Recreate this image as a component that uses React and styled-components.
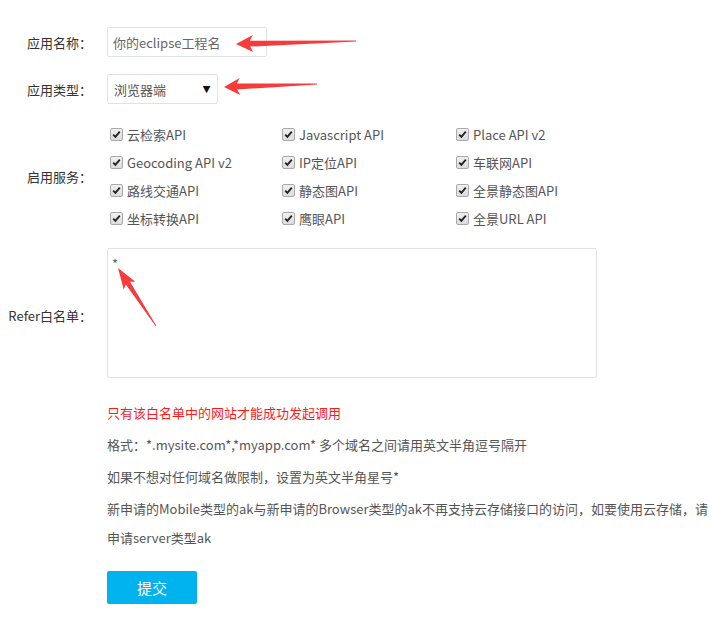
import styled, { createGlobalStyle } from 'styled-components';

const GlobalStyle = createGlobalStyle`
  html, body {
    margin: 0;
    padding: 0;
    background: #fff;
  }
  body {
    font-family: "Noto Sans CJK SC", "Open Sans", sans-serif;
    font-size: 13px;
    color: #555;
  }
`;

const Page = styled.div`
  position: relative;
  width: 714px;
  min-height: 619px;
  padding-top: 27px;
  box-sizing: border-box;
`;

const Row = styled.div`
  display: grid;
  grid-template-columns: 92px 1fr;
  column-gap: 15px;
  align-items: center;
  margin-bottom: ${(props) => props.gap || 16}px;
`;

const Label = styled.label`
  text-align: right;
  font-size: 13px;
  color: #333;
  white-space: nowrap;
`;

const TextInput = styled.input`
  width: 160px;
  height: 30px;
  box-sizing: border-box;
  padding: 0 5px;
  border: 1px solid #dfe2e8;
  border-radius: 2px;
  font-family: inherit;
  font-size: 13px;
  color: #666;
  outline: none;
`;

const SelectBox = styled.div`
  width: 111px;
  height: 30px;
  box-sizing: border-box;
  display: flex;
  align-items: center;
  justify-content: space-between;
  padding: 0 6px 0 6px;
  border: 1px solid #dfe2e8;
  border-radius: 2px;
  font-size: 13px;
  color: #555;
`;

const Caret = styled.span`
  font-size: 9px;
  color: #111;
  transform: scaleX(0.9);
`;

const CheckGrid = styled.div`
  display: grid;
  grid-template-columns: 172px 174px auto;
  grid-auto-rows: 28px;
  padding-left: 3px;
`;

const CheckItem = styled.div`
  display: flex;
  align-items: center;
  gap: 4px;
  font-size: 13px;
  color: #555;
  white-space: nowrap;
`;

const CheckBox = styled.span`
  width: 11px;
  height: 11px;
  display: flex;
  align-items: center;
  justify-content: center;
  border: 1px solid #a9a9a9;
  border-radius: 2px;
  background: linear-gradient(#f0f0f0, #dcdcdc);
  flex-shrink: 0;
`;

const TextArea = styled.textarea`
  width: 490px;
  height: 130px;
  box-sizing: border-box;
  padding: 5px 4px;
  border: 1px solid #dfe2e8;
  border-radius: 2px;
  font-family: inherit;
  font-size: 13px;
  color: #666;
  resize: none;
  outline: none;
`;

const Notes = styled.div`
  padding-left: 107px;
  margin-top: 15px;
`;

const Note = styled.p`
  margin: 0 0 3px;
  line-height: 29px;
  font-size: 13px;
  color: ${(props) => (props.warn ? '#ff1a1a' : '#555')};
`;

const SubmitButton = styled.button`
  margin: 16px 0 0 107px;
  width: 90px;
  height: 33px;
  border: none;
  border-radius: 2px;
  background: #00b3ee;
  color: #fff;
  font-family: inherit;
  font-size: 15px;
  cursor: pointer;
`;

const Overlay = styled.svg`
  position: absolute;
  top: 0;
  left: 0;
  pointer-events: none;
`;

const services = [
  '云检索API', 'Javascript API', 'Place API v2',
  'Geocoding API v2', 'IP定位API', '车联网API',
  '路线交通API', '静态图API', '全景静态图API',
  '坐标转换API', '鹰眼API', '全景URL API',
];

const arrows = [
  { tip: [236, 44], tail: [356, 41], head: 17, headHalf: 8.5, neck: 3, tailHalf: 0.4 },
  { tip: [224, 87], tail: [317, 84], head: 16, headHalf: 8.5, neck: 3, tailHalf: 0.4 },
  { tip: [118, 268], tail: [156, 326], head: 21, headHalf: 7, neck: 2.5, tailHalf: 0.4 },
];

// tapered arrow outline from tip to tail
const arrowPoints = ({ tip, tail, head, headHalf, neck, tailHalf }) => {
  const dx = tail[0] - tip[0];
  const dy = tail[1] - tip[1];
  const len = Math.hypot(dx, dy);
  const ux = dx / len;
  const uy = dy / len;
  const nx = -uy;
  const ny = ux;
  const base = [tip[0] + ux * head, tip[1] + uy * head];
  const notch = [tip[0] + ux * (head - 3), tip[1] + uy * (head - 3)];
  const pts = [
    tip,
    [base[0] + nx * headHalf, base[1] + ny * headHalf],
    [notch[0] + nx * neck, notch[1] + ny * neck],
    [tail[0] + nx * tailHalf, tail[1] + ny * tailHalf],
    [tail[0] - nx * tailHalf, tail[1] - ny * tailHalf],
    [notch[0] - nx * neck, notch[1] - ny * neck],
    [base[0] - nx * headHalf, base[1] - ny * headHalf],
  ];
  return pts.map((p) => `${p[0].toFixed(1)},${p[1].toFixed(1)}`).join(' ');
};

const Check = () => (
  <CheckBox>
    <svg width="9" height="9" viewBox="0 0 9 9">
      <path d="M1.2 4.6 L3.4 6.9 L7.8 1.6" fill="none" stroke="#222" strokeWidth="1.8" />
    </svg>
  </CheckBox>
);

const App = () => (
  <Page>
    <GlobalStyle />
    <Row gap={17}>
      <Label>应用名称：</Label>
      <div>
        <TextInput defaultValue="你的eclipse工程名" />
      </div>
    </Row>

    <Row gap={16}>
      <Label>应用类型：</Label>
      <div>
        <SelectBox>
          <span>浏览器端</span>
          <Caret>▼</Caret>
        </SelectBox>
      </div>
    </Row>

    <Row gap={16}>
      <Label>启用服务：</Label>
      <CheckGrid>
        {services.map((name) => (
          <CheckItem key={name}>
            <Check />
            {name}
          </CheckItem>
        ))}
      </CheckGrid>
    </Row>

    <Row gap={0}>
      <Label>Refer白名单：</Label>
      <div>
        <TextArea defaultValue="*" />
      </div>
    </Row>

    <Notes>
      <Note warn>只有该白名单中的网站才能成功发起调用</Note>
      <Note>格式：*.mysite.com*,*myapp.com* 多个域名之间请用英文半角逗号隔开</Note>
      <Note>如果不想对任何域名做限制，设置为英文半角星号*</Note>
      <Note>
        新申请的Mobile类型的ak与新申请的Browser类型的ak不再支持云存储接口的访问，如要使用云存储，请申请server类型ak
      </Note>
    </Notes>

    <SubmitButton type="button">提交</SubmitButton>

    <Overlay width="714" height="619">
      {arrows.map((a, i) => (
        <polygon key={i} points={arrowPoints(a)} fill="#f53c3c" />
      ))}
    </Overlay>
  </Page>
);

export default App;
